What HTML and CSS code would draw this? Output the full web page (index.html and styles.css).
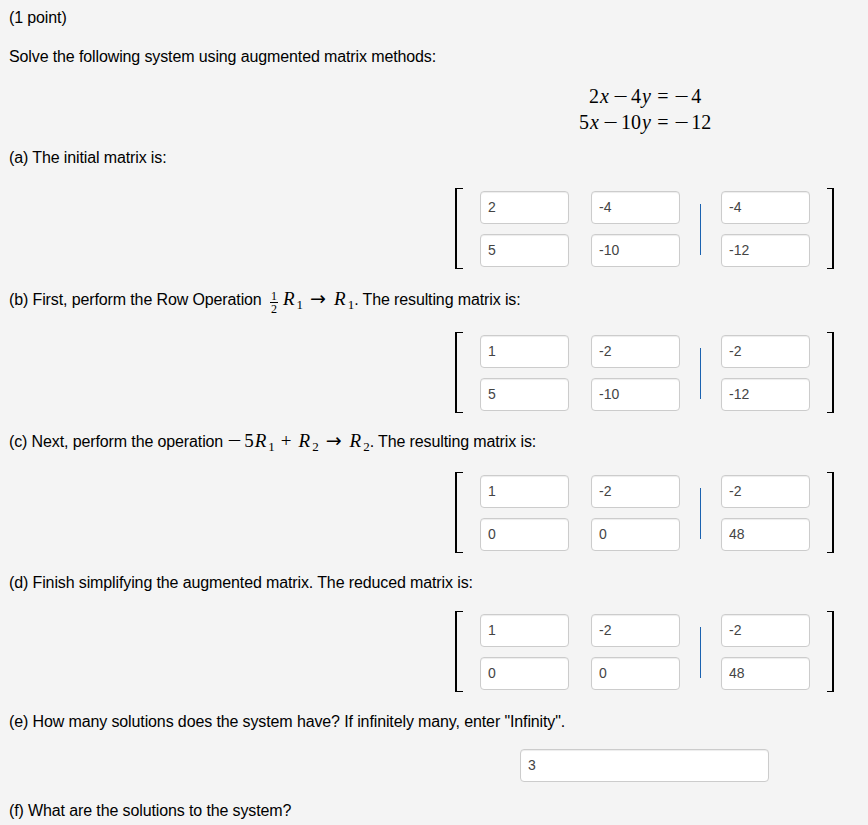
FILE: index.html
```html
<!DOCTYPE html>
<html lang="en">
<head>
<meta charset="utf-8">
<title>Augmented matrix methods</title>
<link rel="stylesheet" href="styles.css">
</head>
<body>
<p class="line">(1 point)</p>
<p class="line intro">Solve the following system using augmented matrix methods:</p>

<div class="eqs">
  <span class="lhs"><span class="mn">2</span><i class="mi">x</i><span class="mo"><span class="minus">−</span></span><span class="mn">4</span><i class="mi">y</i></span>
  <span class="eq">=</span>
  <span class="rhs"><span class="minus neg">−</span><span class="mn">4</span></span>
  <span class="lhs"><span class="mn">5</span><i class="mi">x</i><span class="mo"><span class="minus">−</span></span><span class="mn">10</span><i class="mi">y</i></span>
  <span class="eq">=</span>
  <span class="rhs"><span class="minus neg">−</span><span class="mn">12</span></span>
</div>

<p class="line qa">(a) The initial matrix is:</p>
<div class="matrix m1">
  <span class="br br-l"></span>
  <div class="col"><input class="cell" type="text" value="2"><input class="cell" type="text" value="5"></div>
  <div class="col col-2"><input class="cell" type="text" value="-4"><input class="cell" type="text" value="-10"></div>
  <span class="bar"></span>
  <div class="col col-3"><input class="cell" type="text" value="-4"><input class="cell" type="text" value="-12"></div>
  <span class="br br-r"></span>
</div>

<p class="line qb">(b) First, perform the Row Operation <span class="math"><span class="frac"><span class="num">1</span><span class="den">2</span></span><i class="mi r">R</i><span class="sub">1</span><span class="arrow">→</span><i class="mi r">R</i><span class="sub">1</span></span>. The resulting matrix is:</p>
<div class="matrix m2">
  <span class="br br-l"></span>
  <div class="col"><input class="cell" type="text" value="1"><input class="cell" type="text" value="5"></div>
  <div class="col col-2"><input class="cell" type="text" value="-2"><input class="cell" type="text" value="-10"></div>
  <span class="bar"></span>
  <div class="col col-3"><input class="cell" type="text" value="-2"><input class="cell" type="text" value="-12"></div>
  <span class="br br-r"></span>
</div>

<p class="line qc">(c) Next, perform the operation <span class="math"><span class="minus neg">−</span><span class="mn">5</span><i class="mi r">R</i><span class="sub">1</span><span class="plus">+</span><i class="mi r">R</i><span class="sub">2</span><span class="arrow">→</span><i class="mi r">R</i><span class="sub">2</span></span>. The resulting matrix is:</p>
<div class="matrix m3">
  <span class="br br-l"></span>
  <div class="col"><input class="cell" type="text" value="1"><input class="cell" type="text" value="0"></div>
  <div class="col col-2"><input class="cell" type="text" value="-2"><input class="cell" type="text" value="0"></div>
  <span class="bar"></span>
  <div class="col col-3"><input class="cell" type="text" value="-2"><input class="cell" type="text" value="48"></div>
  <span class="br br-r"></span>
</div>

<p class="line qd">(d) Finish simplifying the augmented matrix. The reduced matrix is:</p>
<div class="matrix m4">
  <span class="br br-l"></span>
  <div class="col"><input class="cell" type="text" value="1"><input class="cell" type="text" value="0"></div>
  <div class="col col-2"><input class="cell" type="text" value="-2"><input class="cell" type="text" value="0"></div>
  <span class="bar"></span>
  <div class="col col-3"><input class="cell" type="text" value="-2"><input class="cell" type="text" value="48"></div>
  <span class="br br-r"></span>
</div>

<p class="line qe">(e) How many solutions does the system have? If infinitely many, enter "Infinity".</p>
<input class="cell answer" type="text" value="3">

<p class="line qf">(f) What are the solutions to the system?</p>
</body>
</html>
```

FILE: styles.css
```css
html, body {
  background: #f4f4f4;
}

body {
  margin: 0;
  padding: 8px 9px 0;
  font-family: "Liberation Sans", Arial, sans-serif;
  font-size: 16px;
  line-height: 20px;
  color: #000;
}

.line {
  margin: 0;
  height: 20px;
  white-space: nowrap;
  letter-spacing: -0.12px;
}

.intro { margin-top: 18.5px; }
.qa { margin-top: 13px; }
.qb { margin-top: 21px; }
.qc { margin-top: 19.5px; }
.qd { margin-top: 20px; }
.qe { margin-top: 20px; }
.qf { margin-top: 19px; }

/* display equations */
.eqs {
  display: grid;
  grid-template-columns: 644px 20px auto;
  margin-top: 16px;
  font-family: "Liberation Serif", "Times New Roman", serif;
  font-size: 20px;
  line-height: 26px;
}

.lhs { text-align: right; padding-right: 1px; }
.eq { text-align: center; }
.rhs { text-align: left; padding-left: 1px; }

.mi { font-style: italic; }
.eqs .mi { margin-left: 1px; margin-right: 1px; }
.mo { margin: 0 5px; }

.minus {
  display: inline-block;
  transform: scaleX(1.3);
}

.neg { margin: 0 4px 0 2px; }

/* inline math */
.math {
  font-family: "Liberation Serif", "Times New Roman", serif;
  font-size: 19px;
  line-height: 0;
  letter-spacing: 0;
}

.math .neg { margin: 0 4px 0 2px; }

.math .r { margin-left: 1px; margin-right: 2px; }

.sub {
  font-size: 13px;
  vertical-align: -4px;
  line-height: 0;
}

.arrow {
  font-family: "DejaVu Sans", sans-serif;
  font-size: 19px;
  margin: 0 7px;
}

.plus { margin: 0 6px; }

.frac {
  display: inline-block;
  vertical-align: -8px;
  font-size: 12px;
  text-align: center;
  margin: 0 4px 0 4px;
  line-height: 12px;
}

.num, .den {
  display: block;
  padding: 0 1px;
}

.den {
  border-top: 1px solid #000;
}

/* matrices */
.matrix {
  display: flex;
  align-items: flex-start;
  height: 81px;
  margin-left: 446px;
}

.m1 { margin-top: 20px; }
.m2 { margin-top: 22px; }
.m3 { margin-top: 19.5px; }
.m4 { margin-top: 18px; }

.br {
  box-sizing: border-box;
  width: 8px;
  height: 81px;
  border: 1.5px solid #000;
}

.br-l {
  border-right: none;
  border-left-width: 2px;
}

.br-r {
  width: 7px;
  margin-left: 17px;
  border-left: none;
  border-right-width: 2px;
}

.col {
  display: flex;
  flex-direction: column;
  gap: 10px;
  padding-top: 3px;
  margin-left: 17px;
}

.col-2 { margin-left: 22px; }
.col-3 { margin-left: 20px; }

.bar {
  width: 1px;
  height: 51px;
  margin: 16px 0 0 20px;
  background: #1a62b0;
}

.cell {
  box-sizing: border-box;
  width: 89px;
  height: 33px;
  margin: 0;
  padding: 0 6px 0 7px;
  border: 1px solid #cccccc;
  border-radius: 4px;
  background: #fff;
  box-shadow: inset 0 1px 1px rgba(0, 0, 0, 0.075);
  font-family: "Liberation Sans", Arial, sans-serif;
  font-size: 14px;
  color: #444;
  outline: none;
}

.answer {
  display: block;
  width: 249px;
  margin: 17px 0 0 511px;
}
```
